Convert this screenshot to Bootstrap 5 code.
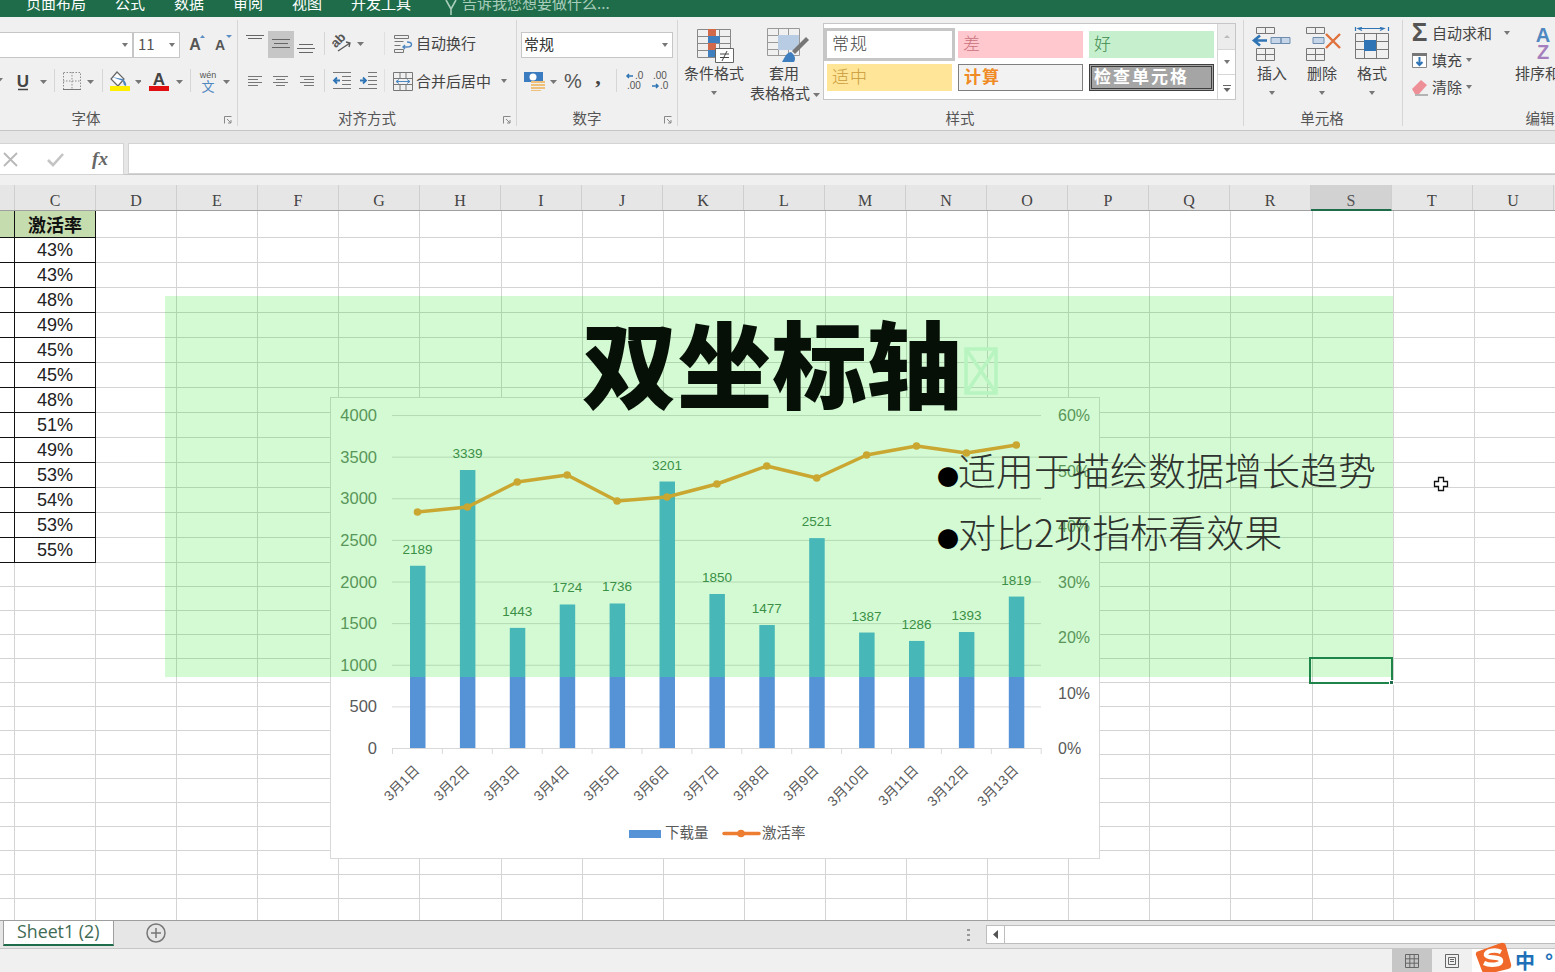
<!DOCTYPE html>
<html lang="zh-CN">
<head>
<meta charset="utf-8">
<title>双坐标轴</title>
<link href="https://cdn.jsdelivr.net/npm/bootstrap@5.3.0/dist/css/bootstrap.min.css" rel="stylesheet">
<style>
html,body{margin:0;width:1555px;height:972px;overflow:hidden;background:#fff;font-family:"Noto Sans CJK SC","Liberation Sans",sans-serif;color:#444}
svg{display:block;flex:none}
.title-strip{height:17px;background:#1e6c49;color:#fff;font-size:15px;line-height:5px;padding-left:26px;gap:29px;overflow:hidden;align-items:flex-start}
.tell{color:#a9cdbb;margin-left:5px;gap:5px}
.ribbon{height:114px;background:#f0f0f0;border-bottom:1px solid #c6c6c6;padding-top:3px;overflow:hidden}
.grp{height:106px;flex:none;border-right:1px solid #d6d6d6;position:relative;overflow:hidden}
.g-font{width:238px}.g-align{width:279px}.g-num{width:161px}.g-style{width:566px}.g-cell{width:159px}.g-edit{width:152px;border-right:0;overflow:visible}
.grp-body{height:88px}
.rows{padding-top:10px;gap:9px}
.rw{height:28px;font-size:15px;line-height:28px;white-space:nowrap;align-items:center}
.rw .t1{margin-top:-2px}
.grp-foot{height:18px;font-size:14.5px;line-height:20px;color:#555;white-space:nowrap}
.lb-font{width:172px}.lb-align{width:258px}.lb-num{width:140px}.lb-style{width:564px}.lb-cell{width:156px}.lb-edit{width:274px;flex:none}
.launch{margin-left:auto;margin-right:5px;margin-top:8px}
.fld{height:26px;background:#fff;border:1px solid #c6c6c6;margin-top:1px;padding:0 4px;font-size:15px;line-height:22px;align-items:flex-start}
.fld .car{align-self:center}
.fld-name{width:133px;border-left:0}.fld-size{width:47px;margin-left:0;color:#555}.fld-fmt{width:152px;margin-left:4px;color:#333;padding-left:2px}
.car{width:0;height:0;border:3.5px solid transparent;border-top:4px solid #777;border-bottom:0;flex:none;display:block}
.mid-on{background:#c6c6c6;height:27px;margin-top:1px}
.after-merge{margin-left:10px}
.bigbtn{text-align:center;font-size:15px;line-height:20px;white-space:nowrap;padding-top:7px;flex:none}
.bigbtn svg{margin:0 auto}
.bb-c{width:72px}.bb-t{width:68px}.bb-x{width:50px}
.bigcar{margin:8px auto 0}
.cellpad{padding-left:3px}
.gallery{width:413px;height:77px;margin:3px 0 0 5px;border:1px solid #c6c6c6;background:#fff}
.gal-grid{display:grid;grid-template-columns:repeat(3,125px);grid-auto-rows:27px;gap:6px;padding:7px 0 0 3px;width:394px}
.sty{font-size:17px;line-height:23px;padding-left:5px;font-weight:300;white-space:nowrap;letter-spacing:1px}
.s-norm{background:#fff;outline:3px solid #c6c6c6;color:#444}
.s-bad{background:#ffc7ce;color:#c9727b}
.s-good{background:#c6efce;color:#3f8a4c}
.s-neu{background:#ffe598;color:#c99a3a}
.s-calc{background:#f2f2f2;border:1px solid #7f7f7f;color:#f08a24;font-weight:700;line-height:21px}
.s-chk{background:#a5a5a5;border:3px double #3f3f3f;color:#fff;font-weight:700;line-height:17px;padding-left:2px;letter-spacing:2px}
.gal-sb{width:18px;border-left:1px solid #d6d6d6}
.gal-sb div{height:25.5px;border-bottom:1px solid #d6d6d6;align-items:center;justify-content:center}
.gal-sb .dis{background:#ececec}
.gal-sb .end{border-bottom:0}
.edit-col{padding:0 0 0 8px;width:112px;flex:none;margin-top:-1px}
.erw{height:27px;font-size:15px;line-height:27px;white-space:nowrap;align-items:center;gap:4px}
.sortbtn{font-size:15px;line-height:20px;white-space:nowrap;padding-top:5px;flex:none}
.sortbtn svg{margin-left:20px}
.band{height:12px;background:#e6e6e6}
.fx-bar{height:32px;background:#e6e6e6;border-bottom:1px solid #c6c6c6;gap:4px}
.fx-left{width:124px;background:#fff;border:1px solid #d4d4d4;border-left:0;margin-bottom:-1px}
.fx-main{flex:1;background:#fff;border:1px solid #d4d4d4;border-right:0}
.band2{height:10px;background:#f0f0f0}
.col-head{height:26px;background:#e6e6e6;border-bottom:1px solid #a0a0a0;font-family:"Liberation Serif",serif;font-size:16px;line-height:31px;color:#444;text-align:center}
.col-head span{width:81px;flex:none;border-right:1px solid #cfcfcf;height:25px;margin-top:0}
.col-head .stub{width:15px}
.col-head .cur{background:#d2d2d2;border-bottom:2px solid #1e6c49;height:26px;color:#555}
.sheet{position:relative;height:709px;overflow:hidden;background:#fff}
.sheet-tbl{border-collapse:separate;border-spacing:0;table-layout:fixed;width:1556px}
.sheet-tbl td{padding:0;height:24px;border-right:1px solid #d4d4d4;border-bottom:1px solid #d4d4d4;width:81px;font-size:18px;line-height:20px;text-align:center;color:#222;font-family:"Liberation Sans",sans-serif}
.sheet-tbl td:first-child{width:15px}
.sheet-tbl tr.h25 td{height:25px}
.sheet-tbl tr.h27 td{height:27px}
.sheet-tbl td.k{border-right-color:#111;border-bottom-color:#111}
.sheet-tbl td.hd{background:#c5dcae;font-family:"Noto Sans CJK SC",sans-serif;font-weight:700;color:#111;font-size:18px}
.chart-win{position:absolute;left:330px;top:186px;width:770px;height:462px;background:#fff;border:1px solid #d9d9d9}
.chart-win text{font-family:"Liberation Sans","Noto Sans CJK SC",sans-serif}
.slide{position:absolute;left:165px;top:85px;width:1228px;height:381px;background:rgba(0,226,0,.17)}
.slide-title{font-size:95px;font-weight:900;line-height:130px;color:#071007;padding:0 0 0 417px;white-space:nowrap;align-items:flex-start}
.tofu{margin:50px 0 0 -1px}
.slide-list{margin:12px 0 0;padding:0 0 0 772px;list-style:none;font-size:38px;font-weight:300;line-height:62px;color:#2e332e;white-space:nowrap}
.slide-list b{font-weight:400;font-size:22px;line-height:1;color:#000;display:inline-block;width:21px;vertical-align:baseline}
.sel-cell{position:absolute;left:1309px;top:446px;width:84px;height:27px;border:2px solid #1e8449}
.sel-cell i{position:absolute;right:-3px;bottom:-3px;width:5px;height:5px;background:#1e6c49;border:1px solid #fff}
.cursor-x{position:absolute;left:1433px;top:265px}
.tabs{height:29px;background:#e6e6e6;border-top:1px solid #9e9e9e;border-bottom:1px solid #c6c6c6}
.sh-tab{width:111px;height:25px;margin-left:3px;background:#fff;border:1px solid #9e9e9e;border-top:0;border-bottom:2px solid #1e6c49;color:#3f6b55;font-size:17.8px;line-height:20px;padding-left:13px;font-family:"Open Sans","Liberation Sans",sans-serif;white-space:nowrap}
.plus{margin:2px 0 0 32px}
.sb-wrap{margin-left:auto;gap:0;align-items:flex-start}
.hscroll{width:551px;height:19px;margin-top:4px;background:#fff;border-top:1px solid #bdbdbd;border-bottom:1px solid #bdbdbd;border-left:1px solid #bdbdbd}
.arrowbox{width:18px;height:19px;margin-top:4px;background:#fff;border:1px solid #bdbdbd;border-right:0;align-items:center;justify-content:center}
.status{height:23px;background:#f0f0f0;position:relative}
.vw{width:40px;height:23px;align-items:center;justify-content:center}
.vw-on{background:#c6c6c6}
.ime{width:83px;position:relative;background:#fff}
.ime-zh{font-size:20px;font-weight:700;color:#1e6fb8;line-height:23px;margin-left:43px}
.ime-dot{font-size:20px;font-weight:700;color:#1e6fb8;line-height:23px;margin-left:10px}
.sogou{position:absolute;left:2px;top:-7px}
</style>
</head>
<body>
<div class="d-flex title-strip">
  <span>页面布局</span><span>公式</span><span>数据</span><span>审阅</span><span>视图</span><span>开发工具</span>
  <span class="d-flex tell">
    <svg width="12" height="17" viewBox="0 0 12 17"><path d="M1 0 6 9 11 0M6 9v6" fill="none" stroke="#a9cdbb" stroke-width="1.6"/></svg>
    <span>告诉我您想要做什么...</span>
  </span>
</div>

<div class="d-flex ribbon">
  <!-- Font -->
  <div class="grp g-font d-flex flex-column">
    <div class="grp-body d-flex flex-column rows">
      <div class="d-flex rw">
        <div class="d-flex fld fld-name"><span class="car ms-auto"></span></div>
        <div class="d-flex fld fld-size"><span>11</span><span class="car ms-auto"></span></div>
        <svg width="28" height="28"><text x="15" y="20" font-size="16" font-weight="600" fill="#555" text-anchor="middle" font-family="Liberation Sans">A</text><path d="M20 8l2.5-3 2.5 3z" fill="#5b8ec2"/></svg>
        <svg width="29" height="28"><text x="12" y="20" font-size="14" font-weight="600" fill="#555" text-anchor="middle" font-family="Liberation Sans">A</text><path d="M18 5h6l-3 3z" fill="#5b8ec2"/></svg>
      </div>
      <div class="d-flex rw">
        <svg width="54" height="28"><path d="M-4 11h7l-3.500 4z" fill="#777"/><text x="23" y="20" font-size="17" font-weight="700" fill="#444" text-anchor="middle" font-family="Liberation Sans">U</text><path d="M18 22.500h10" stroke="#444" stroke-width="1.500"/><path d="M40 13h7l-3.500 4z" fill="#777"/></svg>
        <svg width="48" height="28"><path d="M.5 2v23" stroke="#d6d6d6"/><path d="M9.500 5.500h17v17h-17zM18 5v18M9 14h18" fill="none" stroke="#8c8c8c" stroke-dasharray="1.500 1.500"/><path d="M9 22.500h18" stroke="#777"/><path d="M33 13h7l-3.500 4z" fill="#777"/></svg>
        <svg width="39" height="28"><path d="M.5 2v23" stroke="#d6d6d6"/><path d="M15 5l7 7-6 7-7-7z" fill="#fff" stroke="#666" stroke-width="1.200"/><path d="M10 10l11 2c2 2 4 5 3 7-2 0-3-3-3-5z" fill="#4f87c0"/><path d="M8 19h20v5H8z" fill="#ffee00"/><path d="M33 13h7l-3.500 4z" fill="#777"/></svg>
        <svg width="49" height="28"><text x="18" y="18" font-size="17" font-weight="700" fill="#444" text-anchor="middle" font-family="Liberation Sans">A</text><path d="M8 19h20v5H8z" fill="#e01010"/><path d="M35 13h7l-3.500 4z" fill="#777"/></svg>
        <svg width="48" height="28"><path d="M.5 2v23" stroke="#d6d6d6"/><text x="18" y="11" font-size="9" fill="#555" text-anchor="middle" font-family="Liberation Sans">wén</text><text x="18" y="24" font-size="13" fill="#4f87c0" text-anchor="middle">文</text><path d="M33 13h7l-3.500 4z" fill="#777"/></svg>
      </div>
    </div>
    <div class="grp-foot d-flex"><span class="lb-font text-center">字体</span><svg class="launch" width="8" height="8"><path d="M.5 7.500v-7h7M3 3l4 4M4 7h3V4" fill="none" stroke="#888"/></svg></div>
  </div>
  <!-- Align -->
  <div class="grp g-align d-flex flex-column">
    <div class="grp-body d-flex flex-column rows">
      <div class="d-flex rw">
        <svg width="30" height="28"><path d="M8 5.500h18M10 8.500h14" stroke="#666"/></svg>
        <div class="mid-on"><svg width="26" height="27"><path d="M4 8.500h18M6 12.500h14M4 16.500h18" stroke="#666"/></svg></div>
        <svg width="30" height="28"><path d="M5 14.500h14M3 18.500h18M5 22.500h14" stroke="#666" /></svg>
        <svg width="61" height="28"><path d="M.5 2v23" stroke="#d6d6d6"/><text x="15" y="14" font-size="13" font-weight="700" fill="#555" text-anchor="middle" font-family="Liberation Sans" transform="rotate(-45 15 11)">ab</text><path d="M14 21l12-8m-4-1l4 1-1 4" fill="none" stroke="#555" stroke-width="1.300"/><path d="M33 12h7l-3.500 4z" fill="#777"/><path d="M60.500 2v23" stroke="#e0e0e0"/></svg>
        <svg width="31" height="28"><path d="M9.500 5.500h14v3h-14zM9.500 11.500h9M9.500 15.500h6M9.500 19.500h9v3h-9z" fill="none" stroke="#777"/><path d="M22 12c6 0 6 5 0 5h-4m2-2l-2 2 2 2" fill="none" stroke="#4f87c0" stroke-width="1.400"/></svg>
        <span class="t1">自动换行</span>
      </div>
      <div class="d-flex rw">
        <svg width="86" height="28"><path d="M10 9.500h14M10 12.500h10M10 15.500h14M10 18.500h10M35 9.500h15M38 12.500h9M35 15.500h15M38 18.500h9M62 9.500h14M66 12.500h10M62 15.500h14M66 18.500h10" stroke="#777"/></svg>
        <svg width="61" height="28"><path d="M.5 2v23" stroke="#d6d6d6"/><path d="M9 5.500h18M18 9.500h9M18 13.500h9M18 17.500h9M9 21.500h18M44 5.500h9M44 9.500h9M44 13.500h9M44 17.500h9M35 21.500h18" stroke="#777" /><path d="M16 13.500H10m3-3-3 3 3 3" fill="none" stroke="#2f74b5" stroke-width="1.800"/><path d="M36 13.500h6m-3-3 3 3-3 3" fill="none" stroke="#2f74b5" stroke-width="1.800"/><path d="M60.500 2v23" stroke="#e0e0e0"/></svg>
        <svg width="31" height="28"><path d="M8.500 5.500h19v18h-19zM8.500 11.500h19M8.500 17.500h19M15 5.500v6M21 5.500v6M15 17.500v6M21 17.500v6" fill="none" stroke="#777"/><path d="M11 14.500h14m-3-2 3 2-3 2m-8-4-3 2 3 2" fill="none" stroke="#4f87c0"/></svg>
        <span>合并后居中</span><span class="car after-merge"></span>
      </div>
    </div>
    <div class="grp-foot d-flex"><span class="lb-align text-center">对齐方式</span><svg class="launch" width="8" height="8"><path d="M.5 7.500v-7h7M3 3l4 4M4 7h3V4" fill="none" stroke="#888"/></svg></div>
  </div>
  <!-- Number -->
  <div class="grp g-num d-flex flex-column">
    <div class="grp-body d-flex flex-column rows">
      <div class="d-flex rw"><div class="d-flex fld fld-fmt"><span>常规</span><span class="car ms-auto"></span></div></div>
      <div class="d-flex rw">
        <svg width="99" height="28"><path d="M7 5h19v10H7z" fill="#3b7cc0"/><ellipse cx="16" cy="10" rx="3.500" ry="3.500" fill="#fff"/><path d="M14 14h14v2H14zM14 17h14v2H14zM14 20h14v2H14zM14 23h10v1H14z" fill="#efc07a"/><path d="M33 13h7l-3.500 4z" fill="#777"/><text x="56" y="21" font-size="20" fill="#555" text-anchor="middle" font-family="Liberation Sans">%</text><text x="81" y="17" font-size="22" font-weight="700" fill="#444" text-anchor="middle" font-family="Liberation Serif">,</text></svg>
        <svg width="61" height="28"><path d="M.5 2v23" stroke="#d6d6d6"/><text x="19" y="12" font-size="10" fill="#555" font-family="Liberation Sans">.0</text><text x="11" y="22" font-size="10" fill="#555" font-family="Liberation Sans">.00</text><path d="M17 9h-6m2-2-2 2 2 2" fill="none" stroke="#2f74b5" stroke-width="1.500"/><text x="37" y="12" font-size="10" fill="#555" font-family="Liberation Sans">.00</text><text x="44" y="22" font-size="10" fill="#555" font-family="Liberation Sans">.0</text><path d="M36 19h6m-2-2 2 2-2 2" fill="none" stroke="#2f74b5" stroke-width="1.500"/></svg>
      </div>
    </div>
    <div class="grp-foot d-flex"><span class="lb-num text-center">数字</span><svg class="launch" width="8" height="8"><path d="M.5 7.500v-7h7M3 3l4 4M4 7h3V4" fill="none" stroke="#888"/></svg></div>
  </div>
  <!-- Styles -->
  <div class="grp g-style d-flex flex-column">
    <div class="grp-body d-flex">
      <div class="bigbtn bb-c">
        <svg width="72" height="36"><path d="M19.500 2.500h33v28h-33zM19.500 9.500h33M19.500 16.500h33M19.500 23.500h33M30.500 2.500v28M41.500 2.500v28" fill="none" stroke="#888"/><path d="M30 2h8v7h-8zM30 16h8v7h-8z" fill="#d2694a"/><path d="M30 9h12v7H30zM30 23h8v7h-8z" fill="#3f7fbf"/><path d="M37.500 21.500h18v14h-18z" fill="#fff" stroke="#666"/><path d="M42 27h9M42 30.500h9M49 24l-5 10" stroke="#444" fill="none"/></svg>
        <div>条件格式</div><span class="car bigcar"></span>
      </div>
      <div class="bigbtn bb-t">
        <svg width="68" height="36"><path d="M17.500 1.500h32v27h-32zM17.500 8.500h32M17.500 15.500h32M17.500 22.500h32M28.500 1.500v27M38.500 1.500v27" fill="none" stroke="#999"/><path d="M28 8h21v15H28z" fill="#b8cce4"/><path d="M56 10l-14 14 3 3 14-14z" fill="#777"/><path d="M41 25c-5 1-6 5-9 10h12c2-3 1-7-3-10z" fill="#3f7fbf"/></svg>
        <div>套用</div><div>表格格式<svg class="d-inline" width="10" height="6"><path d="M3 1h7l-3.500 4z" fill="#777"/></svg></div>
      </div>
      <div class="gallery d-flex">
        <div class="gal-grid">
          <div class="sty s-norm">常规</div><div class="sty s-bad">差</div><div class="sty s-good">好</div>
          <div class="sty s-neu">适中</div><div class="sty s-calc">计算</div><div class="sty s-chk">检查单元格</div>
        </div>
        <div class="gal-sb">
          <div class="d-flex dis"><svg width="6" height="4"><path d="M0 4l3-3 3 3z" fill="#bbb"/></svg></div>
          <div class="d-flex"><span class="car"></span></div>
          <div class="d-flex end"><svg width="8" height="8"><path d="M0 1.500h8" stroke="#666"/><path d="M.5 4h7L4 8z" fill="#666"/></svg></div>
        </div>
      </div>
    </div>
    <div class="grp-foot d-flex"><span class="lb-style text-center">样式</span></div>
  </div>
  <!-- Cells -->
  <div class="grp g-cell d-flex flex-column">
    <div class="grp-body d-flex cellpad">
      <div class="bigbtn bb-x">
        <svg width="50" height="36"><path d="M9.500 .5h9v6h-9zM18.500 .5h9v6h-9zM9.500 21.500h18v12h-18zM18.500 21.500v12M9.500 27.500h18" fill="none" stroke="#777"/><path d="M24 10.500h10v6H24zM34 10.500h9v6h-9z" fill="#c6d6e8" stroke="#6d8db0"/><path d="M20 13.500H8m5-5-6 5 6 5" fill="none" stroke="#2f74b5" stroke-width="2.600"/></svg>
        <div>插入</div><span class="car bigcar"></span>
      </div>
      <div class="bigbtn bb-x">
        <svg width="50" height="36"><path d="M9.500 .5h9v6h-9zM18.500 .5h9v6h-9zM9.500 21.500h18v12h-18zM18.500 21.500v12M9.500 27.500h18" fill="none" stroke="#777"/><path d="M16 10.500h11v6H16z" fill="#c6d6e8" stroke="#6d8db0"/><path d="M29 7l14 14M43 7 29 21" stroke="#e0703c" stroke-width="2.400"/></svg>
        <div>删除</div><span class="car bigcar"></span>
      </div>
      <div class="bigbtn bb-x">
        <svg width="50" height="36"><path d="M8.500 6.500h33v25h-33zM8.500 14.500h33M8.500 22.500h33M17.500 6.500v25M29.500 6.500v25" fill="none" stroke="#777"/><path d="M17 13h12v11H17z" fill="#2f74b5"/><path d="M11 1.500h26m-4-1 4 1-4 2M15 .5l-4 1 4 2M8.500 0v4M41.500 0v4" fill="none" stroke="#2f74b5" stroke-width="1.200"/></svg>
        <div>格式</div><span class="car bigcar"></span>
      </div>
    </div>
    <div class="grp-foot d-flex"><span class="lb-cell text-center">单元格</span></div>
  </div>
  <!-- Editing -->
  <div class="grp g-edit d-flex flex-column">
    <div class="grp-body d-flex">
      <div class="edit-col">
        <div class="d-flex erw"><svg width="17" height="20"><text x="8.500" y="18" font-size="26" font-weight="700" fill="#555" text-anchor="middle" font-family="Liberation Sans">Σ</text></svg><span>自动求和</span><span class="car ms-2"></span></div>
        <div class="d-flex erw"><svg width="17" height="18"><path d="M1.500 2.500h14v14h-14z" fill="#fff" stroke="#888"/><path d="M1 2h15v3H1z" fill="#777"/><path d="M8.500 6v8m-3-3 3 3 3-3" fill="none" stroke="#2f74b5" stroke-width="2"/></svg><span>填充</span><span class="car"></span></div>
        <div class="d-flex erw"><svg width="17" height="18"><path d="M1 11 10 2l6 5-8 9H4z" fill="#ee8f98"/><path d="M4 17h13" stroke="#777"/></svg><span>清除</span><span class="car"></span></div>
      </div>
      <div class="sortbtn">
        <svg width="30" height="38"><text x="8" y="17" font-size="20" font-weight="600" fill="#4f87c0" text-anchor="middle" font-family="Liberation Sans">A</text><text x="8" y="34" font-size="20" font-weight="600" fill="#a57fbd" text-anchor="middle" font-family="Liberation Sans">Z</text></svg>
        <div>排序和筛选</div>
      </div>
    </div>
    <div class="grp-foot d-flex"><span class="lb-edit text-center">编辑</span></div>
  </div>
</div>

<div class="band"></div>
<div class="d-flex fx-bar">
  <div class="fx-left d-flex">
    <svg width="123" height="30"><path d="M4 9l13 13M17 9 4 22" stroke="#b8b8b8" stroke-width="1.800"/><path d="M48 16l5 5 10-11" fill="none" stroke="#c4c4c4" stroke-width="2.600"/><text x="100" y="21" font-size="19" font-style="italic" font-weight="700" fill="#666" text-anchor="middle" font-family="Liberation Serif">fx</text></svg>
  </div>
  <div class="fx-main"></div>
</div>
<div class="band2"></div>
<div class="d-flex col-head" id="colHead"></div>

<div class="sheet">
  <table class="sheet-tbl"><tbody id="sheetBody"></tbody></table>
  <div class="chart-win"><svg id="chart" width="768" height="460" viewBox="331 398 768 460"></svg></div>
  <div class="slide">
    <div class="slide-title d-flex"><span>双坐标轴</span>
      <svg class="tofu" width="40" height="50" viewBox="0 0 40 50"><path d="M5 3h30v44H5zM5 3l30 44M35 3 5 47" fill="none" stroke="#b7f4bf" stroke-width="3.500"/></svg>
    </div>
    <ul class="slide-list">
      <li><b>●</b>适用于描绘数据增长趋势</li>
      <li><b>●</b>对比2项指标看效果</li>
    </ul>
  </div>
  <div class="sel-cell"><i></i></div>
  <svg class="cursor-x" width="16" height="16"><path d="M5.500 1.500h5v4h4v5h-4v4h-5v-4h-4v-5h4z" fill="#fff" stroke="#111" stroke-width="1.300"/></svg>
</div>

<div class="d-flex tabs">
  <div class="sh-tab">Sheet1 (2)</div>
  <svg class="plus" width="20" height="20"><circle cx="10" cy="10" r="9" fill="none" stroke="#777" stroke-width="1.500"/><path d="M10 5v10M5 10h10" stroke="#777" stroke-width="1.500"/></svg>
  <div class="d-flex sb-wrap">
    <svg class="me-3 mt-2" width="3" height="14"><path d="M0 0h3v2H0zM0 5h3v2H0zM0 10h3v2H0z" fill="#999"/></svg>
    <div class="d-flex arrowbox"><svg width="6" height="9"><path d="M5 0v9L0 4.500z" fill="#555"/></svg></div>
    <div class="hscroll"></div>
  </div>
</div>
<div class="d-flex status justify-content-end">
  <div class="d-flex vw vw-on"><svg width="14" height="14"><path d="M.5.5h13v13H.5zM4.800.5v13M9.200.5v13M.5 4.800h13M.5 9.200h13" fill="none" stroke="#666"/></svg></div>
  <div class="d-flex vw"><svg width="14" height="14"><path d="M.5.5h13v13H.5z" fill="none" stroke="#666"/><path d="M3.500 3.500h7v7h-7z" fill="none" stroke="#666"/><path d="M5 5.500h4M5 7.500h4" stroke="#666"/></svg></div>
  <div class="d-flex ime">
    <svg class="sogou" width="38" height="32" viewBox="0 0 38 32"><path d="M5 9 27 1q4-1 5 3l5 18q1 4-3 5l-20 5q-4 1-6-3L2 13q-1-3 3-4z" fill="#f0692a"/><path d="M27 10c-6-3-16-1-15 3 1 4 15 1 15 6 0 4-11 5-17 2" fill="none" stroke="#fff" stroke-width="4.500"/></svg>
    <span class="ime-zh">中</span><span class="ime-dot">°</span>
  </div>
</div>

<script src="https://cdn.jsdelivr.net/npm/bootstrap@5.3.0/dist/js/bootstrap.bundle.min.js"></script>
<script>
(function(){
  var letters="CDEFGHIJKLMNOPQRSTU".split(""),h='<span class="stub"></span>';
  letters.forEach(function(l){h+='<span'+(l==="S"?' class="cur"':'')+'>'+l+'</span>';});
  document.getElementById("colHead").innerHTML=h;
  var vals=[43,43,48,49,45,45,48,51,49,53,54,53,55],b="";
  for(var r=0;r<30;r++){
    var cls=r===0?"h27":(r<=13?"h25":""),row='<tr class="'+cls+'">';
    for(var c=0;c<20;c++){
      if(c===0&&r<=13){row+='<td class="k'+(r===0?' hd':'')+'"></td>';}
      else if(c===1&&r===0){row+='<td class="k hd">激活率</td>';}
      else if(c===1&&r<=13){row+='<td class="k">'+vals[r-1]+'%</td>';}
      else{row+='<td></td>';}
    }
    b+=row+'</tr>';
  }
  document.getElementById("sheetBody").innerHTML=b;
  var d=[2189,3339,1443,1724,1736,3201,1850,1477,2521,1387,1286,1393,1819];
  var ly=[512,507,482,475,501,497,484,466,478,455,446,453,445];
  var s="",i,y;
  var leftCol="#6c876c",grey="#595959";
  for(i=0;i<=8;i++){
    y=748-i*41.62;
    s+='<path d="M392 '+(y+.5)+'H1041" stroke="#d9d9d9"/>';
    s+='<text x="377" y="'+(y+6)+'" font-size="16.500" text-anchor="end" fill="'+(i>=2?leftCol:grey)+'">'+(i*500)+'</text>';
  }
  for(i=0;i<=6;i++){
    y=748-i*55.5;
    s+='<text x="1058" y="'+(y+6)+'" font-size="16" fill="'+(i>=2?leftCol:grey)+'">'+(i*10)+'%</text>';
  }
  for(i=0;i<=13;i++){ s+='<path d="M'+(392.5+i*49.9)+' 748v6" stroke="#d9d9d9"/>'; }
  d.forEach(function(v,i){
    var cx=417.5+i*49.9,top=748-v*0.08325,split=677;
    s+='<rect x="'+(cx-7.5)+'" y="'+top+'" width="15.500" height="'+(split-top)+'" fill="rgb(86,175,221)"/>';
    s+='<rect x="'+(cx-7.5)+'" y="'+split+'" width="15.500" height="'+(748-split)+'" fill="#5592d6"/>';
    s+='<text x="'+cx+'" y="'+(top-12)+'" font-size="13.500" text-anchor="middle" fill="#488054">'+v+'</text>';
    s+='<text font-size="14" text-anchor="end" fill="#595959" transform="translate('+(cx+3)+' 771) rotate(-45)">3月'+(i+1)+'日</text>';
  });
  var pts=ly.map(function(y,i){return (417.5+i*49.9)+","+y;}).join(" ");
  s+='<polyline points="'+pts+'" fill="none" stroke="rgb(242,156,60)" stroke-width="3.500" stroke-linejoin="round"/>';
  ly.forEach(function(y,i){s+='<circle cx="'+(417.5+i*49.9)+'" cy="'+y+'" r="3.800" fill="rgb(242,156,60)"/>';});
  s+='<rect x="629" y="830" width="32" height="8" fill="#5592d6"/>';
  s+='<text x="665" y="838" font-size="14.500" fill="#595959">下载量</text>';
  s+='<path d="M724 833.500h35" stroke="#ed7d31" stroke-width="3.500" stroke-linecap="round"/><circle cx="741" cy="833.500" r="3.800" fill="#ed7d31"/>';
  s+='<text x="762" y="838" font-size="14.500" fill="#595959">激活率</text>';
  document.getElementById("chart").innerHTML=s;
})();
</script>
</body>
</html>
